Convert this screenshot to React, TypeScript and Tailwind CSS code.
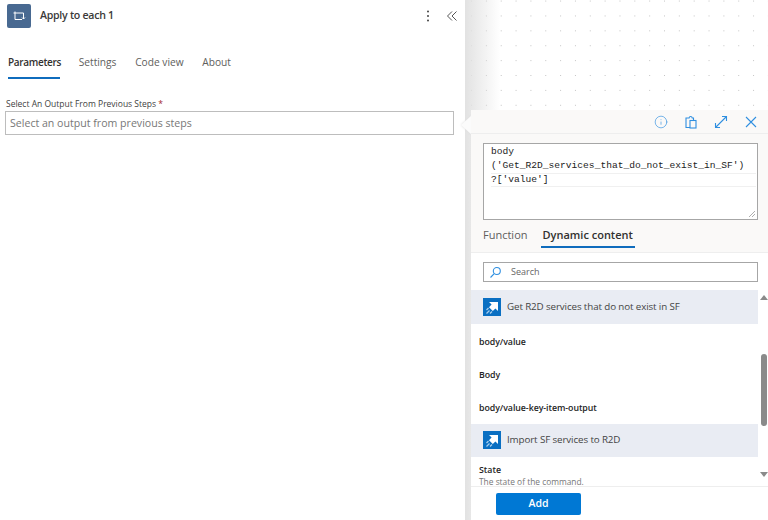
import { Info } from "lucide-react";

const font = "font-['Open_Sans','Noto_Sans',sans-serif]";

function ConnectorIcon() {
  return (
    <div className="flex h-[18px] w-[18px] shrink-0 items-center justify-center bg-[#0a6fc2]">
      <svg width="15" height="15" viewBox="0 0 15 15" fill="none">
        <path d="M4 2h9v9l-2.6-2.6L7.8 11 4 7.2l2.6-2.6z" fill="#fff" />
        <path d="M1.5 13.5L4.5 10.5M1.5 10L3.5 8M5 13.5L7 11.5" stroke="#a9cdec" strokeWidth="1.3" />
      </svg>
    </div>
  );
}

function SectionHeader({ title, tall }: { title: string; tall?: boolean }) {
  return (
    <div className={`flex items-center gap-[6px] bg-[#e9ecf3] pl-[12px] ${tall ? "h-[34px]" : "h-[33px]"}`}>
      <ConnectorIcon />
      <span className="text-[9.8px] font-medium tracking-[-0.12px] text-[#444]">{title}</span>
    </div>
  );
}

function Item({ title }: { title: string }) {
  return (
    <div className="flex h-[33.33px] items-center pl-[8px] pt-[3px] text-[8.8px] font-semibold tracking-[-0.05px] text-[#242424]">
      {title}
    </div>
  );
}

export default function App() {
  return (
    <div className={`flex h-[520px] w-[768px] overflow-hidden bg-white ${font}`}>
      <div className="flex w-[465px] shrink-0 flex-col">
        <div className="flex h-[32px] items-center pl-[7px] pr-[5px]">
          <div className="flex h-[24px] w-[24px] items-center justify-center rounded-[2px] bg-[#486991]">
            <svg width="14" height="14" viewBox="0 0 14 14" fill="none" stroke="#fff" strokeWidth="1">
              <path d="M1.5 4H11.5V10M10 8.5L11.5 10 13 8.5" />
              <path d="M3 2.5V10.5H10" />
            </svg>
          </div>
          <span className="ml-[9px] text-[10.6px] font-semibold tracking-[-0.28px] text-[#3b3a39]">Apply to each 1</span>
          <div className="ml-auto flex items-center gap-[10px]">
            <svg width="12" height="14" viewBox="0 0 12 14" fill="#444">
              <circle cx="6" cy="2.5" r="1" />
              <circle cx="6" cy="7" r="1" />
              <circle cx="6" cy="11.5" r="1" />
            </svg>
            <svg width="16" height="16" viewBox="0 0 16 16" fill="none" stroke="#555" strokeWidth="1">
              <path d="M8 3.5L3.5 8 8 12.5M12.5 3.5L8 8 12.5 12.5" />
            </svg>
          </div>
        </div>

        <div className="mt-[20px] flex h-[27px] gap-[18.7px] pl-[8px] text-[10.2px] text-[#605e5c]">
          <div className="flex h-[27px] w-[52px] flex-col border-b-2 border-[#0f6cbd] text-[10px] font-semibold tracking-[-0.33px] text-[#323130]">
            <span className="leading-[20px]">Parameters</span>
          </div>
          <span className="leading-[20px]">Settings</span>
          <span className="leading-[20px]">Code view</span>
          <span className="leading-[20px]">About</span>
        </div>

        <div className="mt-[19px] pl-[6px] text-[8.5px] leading-[12px] text-[#424242]">
          Select An Output From Previous Steps <span className="text-[#a4262c]">*</span>
        </div>
        <div className="ml-[5px] mt-[1px] flex h-[24px] w-[449px] items-center border border-[#bdbdbd] pl-[4px] pt-[1px] text-[10.6px] text-[#777]">
          Select an output from previous steps
        </div>
      </div>

      <div className="relative flex-1 bg-[radial-gradient(circle,#c4c4c4_0.7px,transparent_0.9px)] bg-[size:14.85px_14.9px] bg-[position:-0.9px_-6.4px]">
        <div className="absolute inset-y-0 left-0 w-[35px] bg-gradient-to-r from-[#e2e2e2] to-transparent" />

        <div className="absolute left-[-4px] top-[116px] h-0 w-0 border-y-[9.5px] border-r-[10px] border-y-transparent border-r-[#fbfbfb] drop-shadow-[0_0_1px_#dddddd]" />

        <div className="absolute bottom-0 left-[6px] right-0 top-[110px] flex flex-col bg-white">
          <div className="flex h-[24px] shrink-0 items-center justify-end gap-[16px] border-b border-[#eeeeee] bg-[#faf9f8] pr-[10px] pt-[1px] text-[#2f8fe0]">
            <Info size={14} strokeWidth={1.1} />
            <svg width="14" height="14" viewBox="0 0 14 14" fill="none" stroke="currentColor" strokeWidth="1.1">
              <path d="M9.5 5V3H8.2C8 1 5.3 1 5.1 3H2v9.5h4" />
              <rect x="6" y="5.5" width="6" height="7.5" />
            </svg>
            <svg width="14" height="14" viewBox="0 0 14 14" fill="none" stroke="currentColor" strokeWidth="1.1">
              <path d="M1.5 12.5L12.5 1.5M8 1.5h4.5V6M1.5 8v4.5H6" />
            </svg>
            <svg width="14" height="14" viewBox="0 0 14 14" fill="none" stroke="currentColor" strokeWidth="1.1">
              <path d="M2 2L12 12M12 2L2 12" />
            </svg>
          </div>

          <div className="flex h-[119px] shrink-0 flex-col border-b border-[#eeeeee] bg-[#faf9f8]">
            <div className="relative ml-[12px] mt-[9px] h-[77px] w-[275px] shrink-0 border border-[#a6a6a6] bg-white pl-[7px] pt-[1px] font-['Liberation_Mono',monospace] text-[9.6px] leading-[14px] text-[#222]">
              <div>body</div>
              <div>('Get_R2D_services_that_do_not_exist_in_SF')</div>
              <div className="mr-[1px] border-y border-[#f0f0f0] leading-[12px]">?['value']</div>
              <svg className="absolute bottom-[1px] right-[1px]" width="8" height="8" viewBox="0 0 8 8" stroke="#999" strokeWidth="0.8">
                <path d="M1 7L7 1M4 7L7 4" />
              </svg>
            </div>
            <div className="ml-[12px] flex h-[33px] gap-[13px] text-[11px]">
              <span className="leading-[29px] text-[#605e5c]">Function</span>
              <span className="h-[28px] border-b-2 border-[#0f6cbd] px-[2px] font-semibold leading-[29px] text-[#323130]">
                Dynamic content
              </span>
            </div>
          </div>

          <div className="ml-[12px] mt-[9px] flex h-[20px] w-[275px] shrink-0 items-center border border-[#a6a6a6] pl-[5px] text-[9px] text-[#666]">
            <svg width="13" height="13" viewBox="0 0 13 13" fill="none" stroke="#2f8fe0" strokeWidth="1.1">
              <circle cx="7.8" cy="5" r="3.5" />
              <path d="M5.2 7.6L1.5 11.5" />
            </svg>
            <span className="ml-[9px]">Search</span>
          </div>

          <div className="relative mt-[8px] flex min-h-0 flex-1 overflow-hidden">
            <div className="w-[287px] shrink-0">
              <SectionHeader title="Get R2D services that do not exist in SF" tall />
              <Item title="body/value" />
              <Item title="Body" />
              <Item title="body/value-key-item-output" />
              <SectionHeader title="Import SF services to R2D" />
              <div className="pl-[8px] pt-[7px]">
                <div className="text-[8.8px] font-semibold leading-[12px] text-[#242424]">State</div>
                <div className="text-[8.4px] leading-[11px] text-[#777]">The state of the command.</div>
              </div>
            </div>
            <div className="flex w-[10px] shrink-0 flex-col items-center bg-white pl-[2px] pt-[5px]">
              <div className="h-0 w-0 border-x-[4px] border-b-[5px] border-x-transparent border-b-[#8a8a8a]" />
              <div className="mt-[54px] h-[72px] w-[6px] shrink-0 rounded-[3px] bg-[#8a8a8a]" />
              <div className="mt-[46px] h-0 w-0 border-x-[4px] border-t-[5px] border-x-transparent border-t-[#8a8a8a]" />
            </div>
          </div>

          <div className="flex h-[34px] shrink-0 items-center border-t border-[#eeeeee] bg-white pl-[25px]">
            <button className="h-[22px] w-[85px] rounded-[2px] bg-[#0078d4] text-[10.5px] font-semibold text-white">
              Add
            </button>
          </div>
        </div>
      </div>
    </div>
  );
}
